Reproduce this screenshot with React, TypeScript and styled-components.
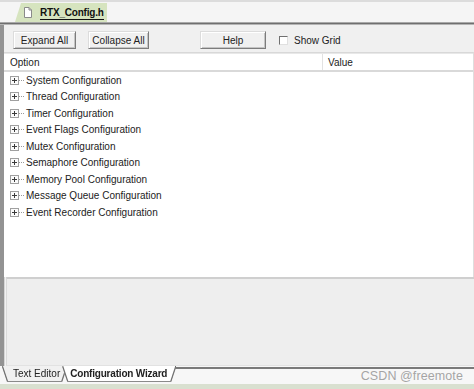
import React from "react";
import styled, { createGlobalStyle } from "styled-components";

const Global = createGlobalStyle`
  html, body { margin: 0; padding: 0; background: #f2f2f2; }
  body { font-family: "Liberation Sans", Arial, sans-serif; }
`;

const Frame = styled.div`
  position: relative;
  width: 474px;
  height: 389px;
  display: flex;
  flex-direction: column;
  overflow: hidden;
  background: #f2f2f2;
  font-family: "Liberation Sans", Arial, sans-serif;
  font-size: 10px;
  color: #1a1a1a;
`;

const TopStrip = styled.div`
  height: 22px;
  box-sizing: border-box;
  border-top: 2px solid #dcdcdc;
  padding: 1px 0 0 15px;
  background: #f5f5f5;
  display: flex;
  align-items: flex-end;
`;

const FileTab = styled.div`
  height: 19px;
  width: 92px;
  box-sizing: border-box;
  background: #d6e4bf;
  clip-path: polygon(6px 0, 100% 0, 100% 100%, 0 100%);
  display: flex;
  align-items: center;
  gap: 8px;
  padding-left: 9px;
`;

const FileName = styled.span`
  font-weight: bold;
  font-size: 10px;
  letter-spacing: -0.2px;
  color: #111;
  border-bottom: 1.5px solid #111;
  line-height: 12px;
  margin-top: 2px;
`;

const DarkRule = styled.div`
  height: 3px;
  box-sizing: border-box;
  border-top: 1px solid #a9a9a9;
  border-bottom: 1px solid #b4b4b4;
  background: #6f6f6f;
`;

const Body = styled.div`
  flex: 1;
  display: flex;
  flex-direction: column;
  border-left: 4px solid #939393;
  box-shadow: inset 1px 0 0 #d6d6d6;
`;

const Toolbar = styled.div`
  height: 27px;
  box-sizing: border-box;
  display: flex;
  align-items: center;
  padding: 3px 0 0 9px;
  background: #f0f0f0;
`;

const Button = styled.button<{ $w: number; $gap?: number }>`
  width: ${(p) => p.$w}px;
  height: 18px;
  margin-left: ${(p) => p.$gap ?? 0}px;
  box-sizing: border-box;
  padding: 0;
  font-family: "Liberation Sans", Arial, sans-serif;
  font-size: 10px;
  color: #222;
  background: #f0f0f0;
  border: 1px solid;
  border-color: #dcdcdc #7c7c7c #7c7c7c #dcdcdc;
  box-shadow: inset 1px 1px 0 #ffffff, inset -1px -1px 0 #c4c4c4;
`;

const CheckLabel = styled.label`
  display: flex;
  align-items: center;
  gap: 6px;
  margin-left: 13px;
  font-size: 10px;
  color: #222;
`;

const CheckBox = styled.span`
  width: 9px;
  height: 9px;
  box-sizing: border-box;
  background: #fff;
  border: 1px solid;
  border-color: #707070 #e0e0e0 #e0e0e0 #707070;
`;

const Grid = styled.div`
  height: 224px;
  display: flex;
  flex-direction: column;
  background: #fff;
  border-top: 1px solid #d8d8d8;
  border-right: 1px solid #dedede;
`;

const HeaderRow = styled.div`
  height: 16px;
  display: grid;
  grid-template-columns: 318px 1fr;
  border-bottom: 2px solid #d9d9d9;
  border-top: 1px solid #e8e8e8;
`;

const HeaderCell = styled.div<{ $divider?: boolean }>`
  display: flex;
  align-items: center;
  padding-left: ${(p) => (p.$divider ? 5 : 6)}px;
  border-left: ${(p) => (p.$divider ? "1px solid #e2e2e2" : "none")};
  font-size: 10px;
  color: #222;
`;

const Tree = styled.div`
  display: flex;
  flex-direction: column;
  padding-left: 6px;
`;

const Row = styled.div`
  height: 16.5px;
  display: flex;
  align-items: center;
  position: relative;
`;

const Expander = styled.span`
  width: 9px;
  height: 9px;
  box-sizing: border-box;
  border: 1px solid #a0a0a0;
  background: #fbfbfb;
  position: relative;
  flex: none;
  &::before {
    content: "";
    position: absolute;
    left: 1px;
    top: 3px;
    width: 5px;
    height: 1px;
    background: #3a3a3a;
  }
  &::after {
    content: "";
    position: absolute;
    left: 3px;
    top: 1px;
    width: 1px;
    height: 5px;
    background: #3a3a3a;
  }
`;

const Connector = styled.span`
  width: 5px;
  height: 0;
  border-top: 1px dotted #9a9a9a;
  margin-right: 2px;
`;

const Label = styled.span`
  font-size: 10px;
  color: #222;
  white-space: nowrap;
`;

const Description = styled.div`
  flex: 1;
  margin-left: 2px;
  background: #eeeeee;
  border-top: 2px solid #cfcfcf;
  border-left: 1px solid #dadada;
  border-bottom: 1px solid #e2e2e2;
`;

const TabBar = styled.div`
  height: 18px;
  display: flex;
  align-items: flex-start;
  background: #f7f7f7;
  padding-left: 3px;
`;

const BottomTabWrap = styled.div<{ $active?: boolean }>`
  filter: drop-shadow(1px 0 0 #6e6e6e) drop-shadow(-1px 0 0 #6e6e6e)
    drop-shadow(0 1px 0 #8a8a8a);
  margin-left: ${(p) => (p.$active ? -3 : 0)}px;
  z-index: ${(p) => (p.$active ? 2 : 1)};
`;

const BottomTab = styled.div<{ $active?: boolean }>`
  height: 15px;
  display: flex;
  align-items: center;
  padding: 0 ${(p) => (p.$active ? 8 : 6)}px 0 ${(p) => (p.$active ? 7 : 10)}px;
  background: ${(p) => (p.$active ? "#ffffff" : "#f1f1f1")};
  clip-path: polygon(0 0, 100% 0, calc(100% - 5px) 100%, 5px 100%);
  font-size: 10px;
  letter-spacing: ${(p) => (p.$active ? "-0.2px" : "0")};
  font-weight: ${(p) => (p.$active ? "bold" : "normal")};
  color: #222;
  white-space: nowrap;
`;

const TabLine = styled.div`
  flex: 1;
  height: 2px;
  background: #7a7a7a;
  margin-top: 1px;
`;

const FooterStrip = styled.div`
  height: 5px;
  background: #d9e0d0;
`;

const Watermark = styled.div`
  position: absolute;
  right: 11px;
  bottom: 6px;
  font-family: "Liberation Sans", Arial, sans-serif;
  font-size: 12.5px;
  color: #a4a4a4;
  text-shadow: 0 0 1px #ffffff;
  letter-spacing: 0.1px;
`;

const DocIcon = () => (
  <svg width="8" height="11" viewBox="0 0 8 11">
    <path d="M0.5 0.5 H5 L7.5 3 V10.5 H0.5 Z" fill="#fff" stroke="#8a8a8a" />
    <path d="M5 0.5 V3 H7.5" fill="none" stroke="#8a8a8a" />
  </svg>
);

const items = [
  "System Configuration",
  "Thread Configuration",
  "Timer Configuration",
  "Event Flags Configuration",
  "Mutex Configuration",
  "Semaphore Configuration",
  "Memory Pool Configuration",
  "Message Queue Configuration",
  "Event Recorder Configuration",
];

export default function App() {
  return (
    <Frame>
      <Global />
      <TopStrip>
        <FileTab>
          <DocIcon />
          <FileName>RTX_Config.h</FileName>
        </FileTab>
      </TopStrip>
      <DarkRule />
      <Body>
        <Toolbar>
          <Button $w={63}>Expand All</Button>
          <Button $w={61} $gap={12}>Collapse All</Button>
          <Button $w={66} $gap={51}>Help</Button>
          <CheckLabel>
            <CheckBox />
            Show Grid
          </CheckLabel>
        </Toolbar>
        <Grid>
          <HeaderRow>
            <HeaderCell>Option</HeaderCell>
            <HeaderCell $divider>Value</HeaderCell>
          </HeaderRow>
          <Tree>
            {items.map((t) => (
              <Row key={t}>
                <Expander />
                <Connector />
                <Label>{t}</Label>
              </Row>
            ))}
          </Tree>
        </Grid>
        <Description />
      </Body>
      <TabBar>
        <BottomTabWrap>
          <BottomTab>Text Editor</BottomTab>
        </BottomTabWrap>
        <BottomTabWrap $active>
          <BottomTab $active>Configuration Wizard</BottomTab>
        </BottomTabWrap>
        <TabLine />
      </TabBar>
      <FooterStrip />
      <Watermark>CSDN @freemote</Watermark>
    </Frame>
  );
}
